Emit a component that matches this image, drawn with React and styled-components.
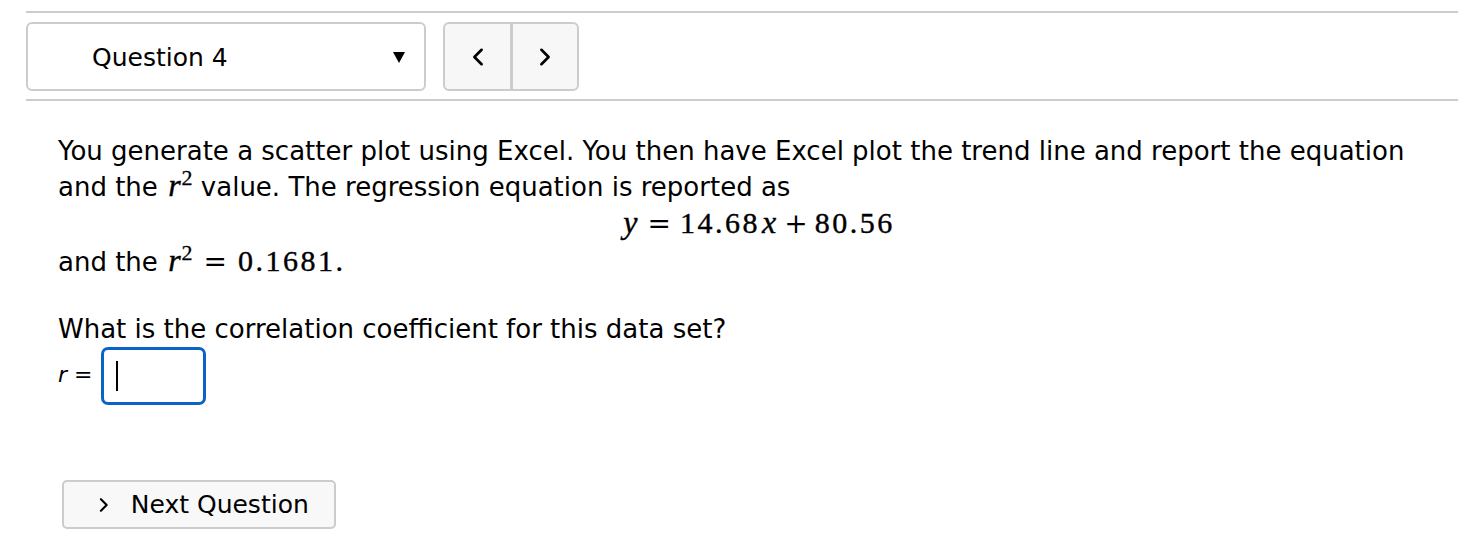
import styled, { createGlobalStyle } from 'styled-components';

const GlobalStyle = createGlobalStyle`
    body {
        margin: 0;
        background: #ffffff;
        font-family: "DejaVu Sans", Verdana, sans-serif;
        color: #000;
    }
`;

const Page = styled.div`
    padding: 11px 0 0 26px;
`;

const Header = styled.div`
    border-top: 2px solid #cccccc;
    border-bottom: 2px solid #cccccc;
    padding: 9px 0 8px;
    display: flex;
    gap: 17px;
`;

const Select = styled.div`
    width: 400px;
    height: 69px;
    box-sizing: border-box;
    border: 2px solid #cccccc;
    border-radius: 6px;
    display: flex;
    align-items: center;
    padding: 2px 19px 0 64px;
    font-size: 25px;
    justify-content: space-between;
`;

const Caret = styled.span`
    width: 0;
    height: 0;
    border-left: 6px solid transparent;
    border-right: 6px solid transparent;
    border-top: 11px solid #000;
`;

const NavGroup = styled.div`
    display: flex;
    height: 69px;
    box-sizing: border-box;
    border: 2px solid #cccccc;
    border-radius: 6px;
    background: #f7f7f7;
    overflow: hidden;
`;

const NavButton = styled.div`
    width: ${p => (p.$first ? '65px' : '64px')};
    display: flex;
    align-items: center;
    justify-content: center;
    border-left: ${p => (p.$first ? 'none' : '3px solid #cccccc')};
`;

const Content = styled.div`
    padding: 33px 0 0 32px;
    font-size: 26px;
    line-height: 35px;
`;

const Para = styled.p`
    margin: 0;
`;

const Tex = styled.span`
    font-family: "Liberation Serif", "DejaVu Serif", serif;
    font-size: 30px;
    line-height: 1;
    -webkit-text-stroke: 0.4px #000;
`;

const Var = styled(Tex)`
    font-style: italic;
    font-size: 32px;
    margin: 0 1px 0 2px;
`;

const Num = styled(Tex)`
    letter-spacing: 2.5px;
`;

const Op = styled.span`
    font-family: "DejaVu Serif", serif;
    font-size: 28px;
    line-height: 1;
    margin: 0 ${p => p.$space || 9}px;
`;

const Sup = styled.span`
    font-family: "Liberation Serif", "DejaVu Serif", serif;
    font-size: 22px;
    line-height: 1;
    position: relative;
    top: -11px;
    -webkit-text-stroke: 0.3px #000;
`;

const Display = styled.div`
    text-align: center;
    font-family: "Liberation Serif", "DejaVu Serif", serif;
    font-size: 30px;
    line-height: 36px;
    margin: 0 0 3px;
`;

const Question = styled.p`
    margin: 32px 0 0;
`;

const AnswerRow = styled.div`
    display: flex;
    align-items: center;
    gap: 9px;
`;

const AnswerLabel = styled.span`
    font-style: italic;
    font-size: 22px;
    position: relative;
    top: -2px;
`;

const Input = styled.div`
    width: 105px;
    height: 58px;
    box-sizing: border-box;
    border: 3px solid #0a64c8;
    border-radius: 7px;
    display: flex;
    align-items: center;
    padding-left: 12px;
`;

const CursorBar = styled.span`
    width: 2px;
    height: 30px;
    background: #000;
`;

const NextButton = styled.div`
    margin: 75px 0 0 4px;
    width: 274px;
    height: 49px;
    box-sizing: border-box;
    border: 2px solid #cccccc;
    border-radius: 5px;
    background: #f8f8f8;
    display: flex;
    align-items: center;
    justify-content: center;
    gap: 22px;
    padding-left: 10px;
    font-size: 25px;
`;

const Chevron = ({ dir = 'right', size = 16 }) => (
    <svg width={size * 0.6} height={size} viewBox="0 0 10 16" fill="none" stroke="#000" strokeWidth="2.2" strokeLinecap="round" strokeLinejoin="round">
        {dir === 'left' ? <polyline points="8,2 2,8 8,14" /> : <polyline points="2,2 8,8 2,14" />}
    </svg>
);

export default function App() {
    return (
        <Page>
            <GlobalStyle />
            <Header>
                <Select>
                    <span>Question 4</span>
                    <Caret />
                </Select>
                <NavGroup>
                    <NavButton $first><Chevron dir="left" size={20} /></NavButton>
                    <NavButton><Chevron dir="right" size={20} /></NavButton>
                </NavGroup>
            </Header>
            <Content>
                <Para>
                    You generate a scatter plot using Excel. You then have Excel plot the trend line and report the equation<br />
                    and the <Var>r</Var><Sup>2</Sup> value. The regression equation is reported as
                </Para>
                <Display>
                    <Var>y</Var><Op>=</Op><Num>14.68</Num><Var>x</Var><Op $space={7}>+</Op><Num>80.56</Num>
                </Display>
                <Para>
                    and the <Var>r</Var><Sup>2</Sup><Op $space={11}>=</Op><Num>0.1681.</Num>
                </Para>
                <Question>What is the correlation coefficient for this data set?</Question>
                <AnswerRow>
                    <AnswerLabel>r =</AnswerLabel>
                    <Input><CursorBar /></Input>
                </AnswerRow>
                <NextButton>
                    <Chevron size={16} />
                    <span>Next Question</span>
                </NextButton>
            </Content>
        </Page>
    );
}
